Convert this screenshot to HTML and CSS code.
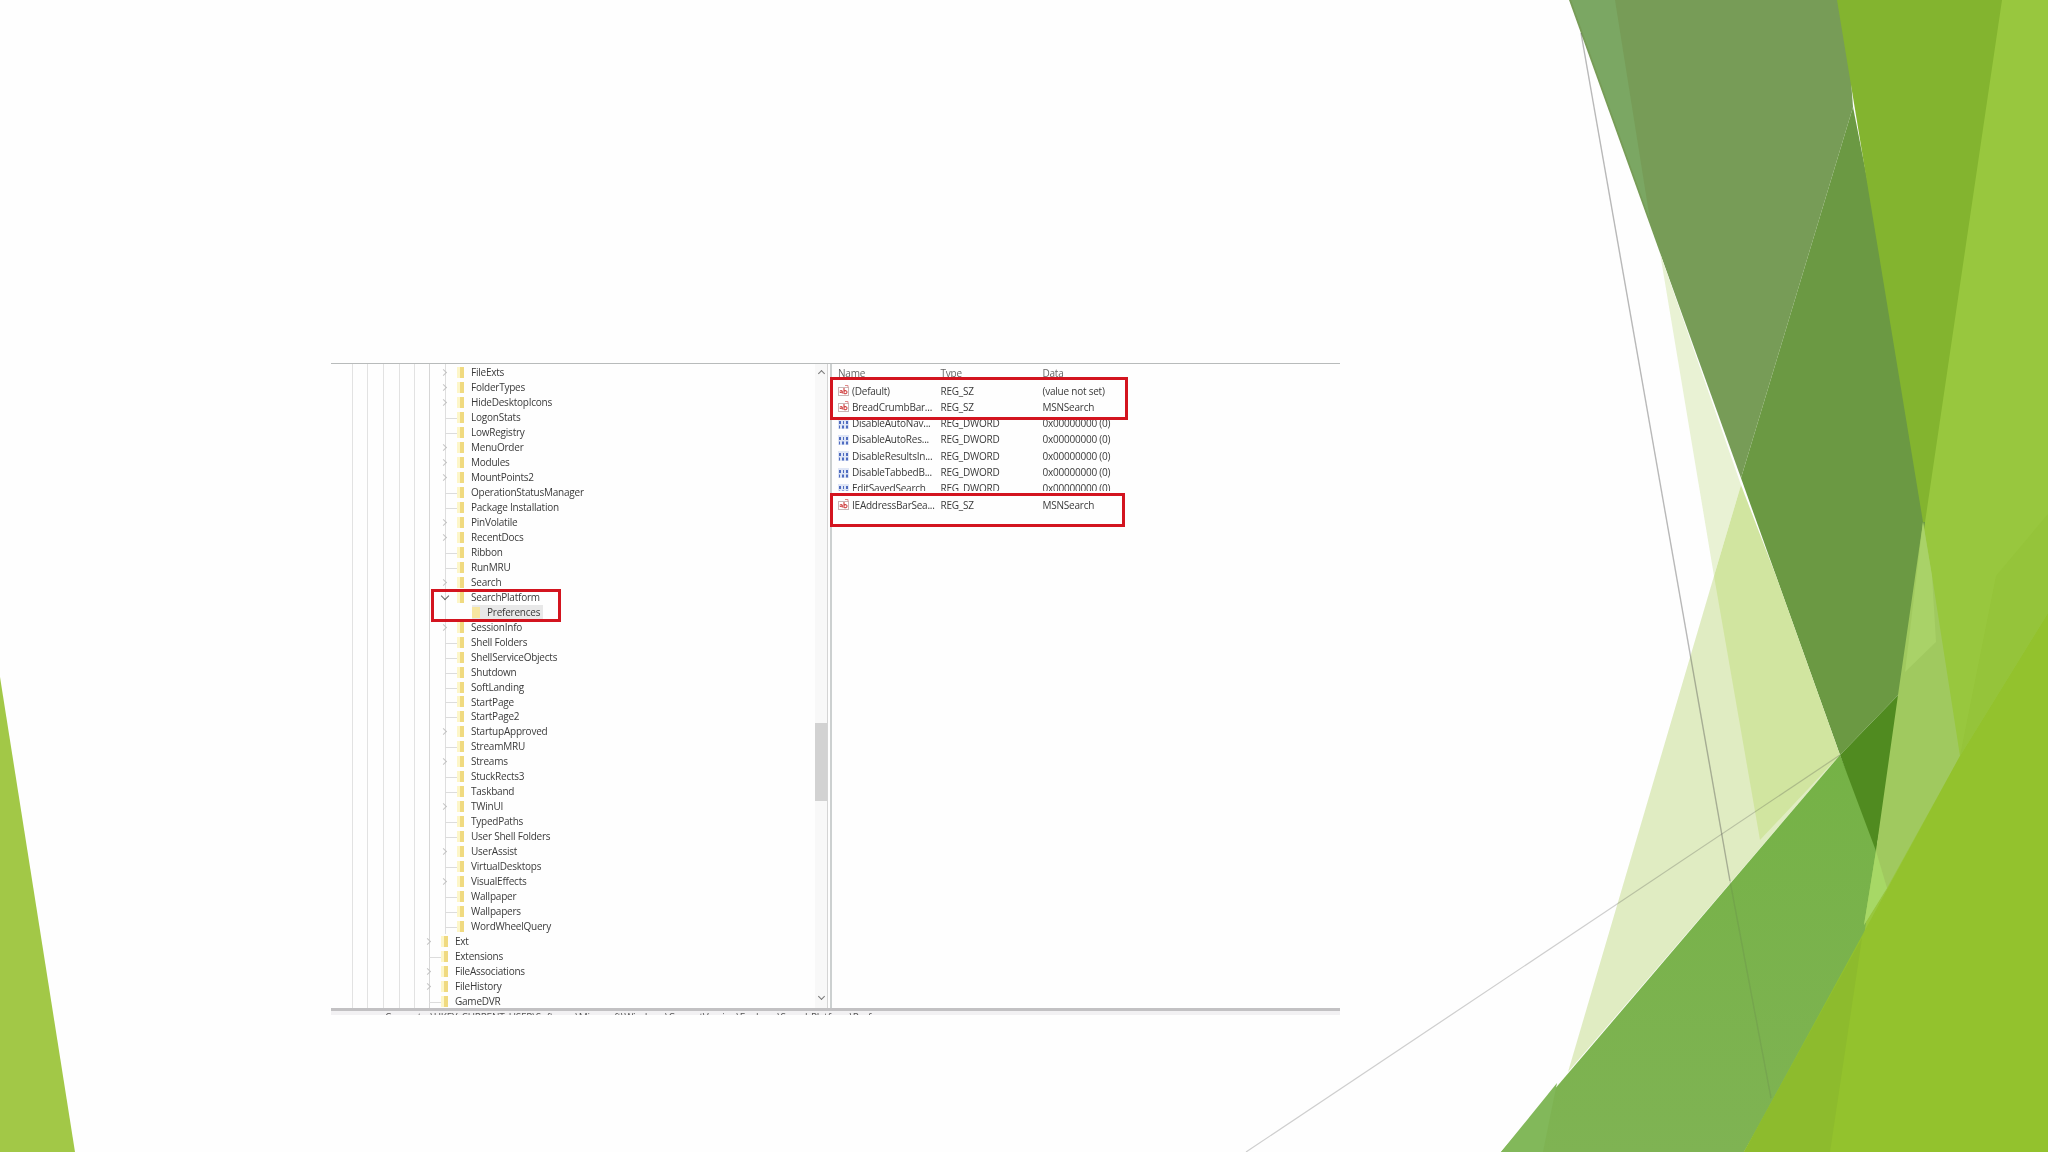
FILE: index.html
```html
<!DOCTYPE html>
<html lang="en">
<head>
<meta charset="utf-8">
<title>Registry editor slide</title>
<link rel="stylesheet" href="styles.css">
</head>
<body>
<main class="slide">
  <svg class="facet" viewBox="0 0 2048 1152" aria-hidden="true">
    <defs>
      <linearGradient id="mid-fill" x1="0" y1="0" x2="0" y2="1">
        <stop offset="0" stop-color="#75b246"/>
        <stop offset="1" stop-color="#7fb353"/>
      </linearGradient>
    </defs>
    <polygon class="f-olive" points="1569,0 1845,0 1853,107 1741,478"/>
    <polygon class="f-olive-edge" points="1571,0 1615,0 1650,220"/>
    <polygon class="f-moss" points="1853,107 1935,522 1905,688 1840,755 1741,478"/>
    <polygon class="f-grass" points="1837,0 2010,0 1930,522 1923,522"/>
    <polygon class="f-pale-a" points="1660,253 1741,485 1714,576"/>
    <polygon class="f-pale-b" points="1714,576 1840,755 1568,1072"/>
    <polygon class="f-pale-c" points="1741,485 1776,576 1840,755 1760,840 1714,576"/>
    <polygon fill="url(#mid-fill)" points="1840,755 1880,851 1868,936 1744,1152 1501,1152"/>
    <polygon class="f-mid-edge" points="1501,1152 1543,1152 1557,1083"/>
    <polygon class="f-deep" points="1840,755 1905,688 1876,851"/>
    <polygon class="f-lime" points="2002,0 2048,0 2048,1152 1744,1152 1864,936"/>
    <polygon class="f-soft" points="1923,522 1932,576 1960,756 1887,888 1864,925 1876,851 1899,688"/>
    <polygon class="f-soft-top" points="1923,522 1932,576 1936,642 1905,672"/>
    <polygon class="f-soft-low" points="1876,851 1887,888 1864,925"/>
    <polygon class="f-bright" points="1744,1152 1960,756 2048,613 2048,1152"/>
    <polygon class="f-bright-low" points="1744,1152 1862,938 1830,1152"/>
    <polygon class="f-corner" points="1996,576 2048,514 2048,613 1960,756"/>
    <polygon class="f-left" points="0,677 75,1152 0,1152"/>
    <line class="f-line-a" x1="1581" y1="33" x2="1730" y2="881"/>
    <line class="f-line-c" x1="1730" y1="881" x2="1771" y2="1098"/>
    <line class="f-line-b" x1="1246" y1="1152" x2="1840" y2="755"/>
  </svg>

  <section class="shot">
    <div class="panes">
      <div class="tree">
        <div class="row"><span class="arrow"></span><span class="folder"></span><span>FileExts</span></div>
        <div class="row"><span class="arrow"></span><span class="folder"></span><span>FolderTypes</span></div>
        <div class="row"><span class="arrow"></span><span class="folder"></span><span>HideDesktopIcons</span></div>
        <div class="row"><span class="tick"></span><span class="folder"></span><span>LogonStats</span></div>
        <div class="row"><span class="tick"></span><span class="folder"></span><span>LowRegistry</span></div>
        <div class="row"><span class="arrow"></span><span class="folder"></span><span>MenuOrder</span></div>
        <div class="row"><span class="arrow"></span><span class="folder"></span><span>Modules</span></div>
        <div class="row"><span class="arrow"></span><span class="folder"></span><span>MountPoints2</span></div>
        <div class="row"><span class="tick"></span><span class="folder"></span><span>OperationStatusManager</span></div>
        <div class="row"><span class="tick"></span><span class="folder"></span><span>Package Installation</span></div>
        <div class="row"><span class="arrow"></span><span class="folder"></span><span>PinVolatile</span></div>
        <div class="row"><span class="arrow"></span><span class="folder"></span><span>RecentDocs</span></div>
        <div class="row"><span class="tick"></span><span class="folder"></span><span>Ribbon</span></div>
        <div class="row"><span class="tick"></span><span class="folder"></span><span>RunMRU</span></div>
        <div class="row"><span class="arrow"></span><span class="folder"></span><span>Search</span></div>
        <div class="row"><span class="arrow open"></span><span class="folder"></span><span>SearchPlatform</span></div>
        <div class="row child"><span class="selected"><span class="folder"></span><span>Preferences</span></span></div>
        <div class="row"><span class="arrow"></span><span class="folder"></span><span>SessionInfo</span></div>
        <div class="row"><span class="tick"></span><span class="folder"></span><span>Shell Folders</span></div>
        <div class="row"><span class="tick"></span><span class="folder"></span><span>ShellServiceObjects</span></div>
        <div class="row"><span class="tick"></span><span class="folder"></span><span>Shutdown</span></div>
        <div class="row"><span class="tick"></span><span class="folder"></span><span>SoftLanding</span></div>
        <div class="row"><span class="tick"></span><span class="folder"></span><span>StartPage</span></div>
        <div class="row"><span class="tick"></span><span class="folder"></span><span>StartPage2</span></div>
        <div class="row"><span class="arrow"></span><span class="folder"></span><span>StartupApproved</span></div>
        <div class="row"><span class="tick"></span><span class="folder"></span><span>StreamMRU</span></div>
        <div class="row"><span class="arrow"></span><span class="folder"></span><span>Streams</span></div>
        <div class="row"><span class="tick"></span><span class="folder"></span><span>StuckRects3</span></div>
        <div class="row"><span class="tick"></span><span class="folder"></span><span>Taskband</span></div>
        <div class="row"><span class="arrow"></span><span class="folder"></span><span>TWinUI</span></div>
        <div class="row"><span class="tick"></span><span class="folder"></span><span>TypedPaths</span></div>
        <div class="row"><span class="tick"></span><span class="folder"></span><span>User Shell Folders</span></div>
        <div class="row"><span class="arrow"></span><span class="folder"></span><span>UserAssist</span></div>
        <div class="row"><span class="tick"></span><span class="folder"></span><span>VirtualDesktops</span></div>
        <div class="row"><span class="arrow"></span><span class="folder"></span><span>VisualEffects</span></div>
        <div class="row"><span class="tick"></span><span class="folder"></span><span>Wallpaper</span></div>
        <div class="row"><span class="tick"></span><span class="folder"></span><span>Wallpapers</span></div>
        <div class="row"><span class="tick"></span><span class="folder"></span><span>WordWheelQuery</span></div>
        <div class="row top"><span class="arrow"></span><span class="folder"></span><span>Ext</span></div>
        <div class="row top"><span class="tick"></span><span class="folder"></span><span>Extensions</span></div>
        <div class="row top"><span class="arrow"></span><span class="folder"></span><span>FileAssociations</span></div>
        <div class="row top"><span class="arrow"></span><span class="folder"></span><span>FileHistory</span></div>
        <div class="row top"><span class="tick"></span><span class="folder"></span><span>GameDVR</span></div>
      </div>

      <div class="scroll">
        <span class="scroll-up"></span>
        <span class="thumb"></span>
        <span class="scroll-down"></span>
      </div>

      <div class="values">
        <div class="head"><span class="c-name">Name</span><span class="c-type">Type</span><span class="c-data">Data</span></div>
        <div class="val"><span class="c-name"><svg class="ico" viewBox="0 0 11 11"><use href="#ico-sz"/></svg>(Default)</span><span class="c-type">REG_SZ</span><span class="c-data">(value not set)</span></div>
        <div class="val"><span class="c-name"><svg class="ico" viewBox="0 0 11 11"><use href="#ico-sz"/></svg>BreadCrumbBar...</span><span class="c-type">REG_SZ</span><span class="c-data">MSNSearch</span></div>
        <div class="val"><span class="c-name"><svg class="ico" viewBox="0 0 11 11"><use href="#ico-dw"/></svg>DisableAutoNav...</span><span class="c-type">REG_DWORD</span><span class="c-data">0x00000000 (0)</span></div>
        <div class="val"><span class="c-name"><svg class="ico" viewBox="0 0 11 11"><use href="#ico-dw"/></svg>DisableAutoRes...</span><span class="c-type">REG_DWORD</span><span class="c-data">0x00000000 (0)</span></div>
        <div class="val"><span class="c-name"><svg class="ico" viewBox="0 0 11 11"><use href="#ico-dw"/></svg>DisableResultsIn...</span><span class="c-type">REG_DWORD</span><span class="c-data">0x00000000 (0)</span></div>
        <div class="val"><span class="c-name"><svg class="ico" viewBox="0 0 11 11"><use href="#ico-dw"/></svg>DisableTabbedB...</span><span class="c-type">REG_DWORD</span><span class="c-data">0x00000000 (0)</span></div>
        <div class="val cut"><span class="c-name"><svg class="ico" viewBox="0 0 11 11"><use href="#ico-dw"/></svg>EditSavedSearch</span><span class="c-type">REG_DWORD</span><span class="c-data">0x00000000 (0)</span></div>
        <div class="val after-cut"><span class="c-name"><svg class="ico" viewBox="0 0 11 11"><use href="#ico-sz"/></svg>IEAddressBarSea...</span><span class="c-type">REG_SZ</span><span class="c-data">MSNSearch</span></div>
      </div>
    </div>
    <div class="status">Computer\HKEY_CURRENT_USER\Software\Microsoft\Windows\CurrentVersion\Explorer\SearchPlatform\Preferences</div>

    <span class="mark mark-tree"></span>
    <span class="mark mark-top"></span>
    <span class="mark mark-bottom"></span>
  </section>

  <svg class="defs" aria-hidden="true">
    <symbol id="ico-sz" viewBox="0 0 11 11">
      <rect x="0.5" y="2.5" width="10" height="8" fill="#fff" stroke="#c9b6b6"/>
      <path d="M2 6.500c0-1.400 2.300-1.400 2.300 0v2M2 8c0-1 2.300-1 2.300-.6M6 3v5.500c1.800.6 3 0 3-1.500s-1.700-1.800-3-.8" fill="none" stroke="#cf3f3f" stroke-width="1.100"/>
      <path d="M7 .5h3v2" fill="none" stroke="#e08a8a"/>
    </symbol>
    <symbol id="ico-dw" viewBox="0 0 11 11">
      <rect x="0" y="1" width="11" height="10" fill="#dfe6f6"/>
      <path d="M1 3h2v3H1zM5 3h1v3H5zM8 3h2v3H8zM1 7.500h1v3H1zM4 7.500h2v3H4zM8 7.500h2v3H8z" fill="#4f6cc0"/>
    </symbol>
  </svg>
</main>
</body>
</html>
```
FILE: styles.css
```css
html, body {
  margin: 0;
  padding: 0;
  background: #fefefe;
}

.slide {
  position: relative;
  box-sizing: border-box;
  width: 2048px;
  height: 1152px;
  overflow: hidden;
  padding: 363px 0 0 331px;
  background: #fefefe;
  font-family: "Open Sans", "Noto Sans", sans-serif;
}

/* Decorative facet artwork */
.facet {
  position: absolute;
  inset: 0;
  width: 2048px;
  height: 1152px;
}
.f-lime { fill: #98c73e; }
.f-olive { fill: #779c57; }
.f-olive-edge { fill: #7ba763; }
.f-moss { fill: #6b9943; }
.f-grass { fill: #83b42f; }
.f-pale-a { fill: #e9f2d4; }
.f-pale-b { fill: #e0ecc2; }
.f-pale-c { fill: #d1e5a0; }
.f-mid-edge { fill: #82b85a; }
.f-deep { fill: #508b20; }
.f-soft { fill: #a0c95f; }
.f-soft-top { fill: #a9d268; }
.f-soft-low { fill: #a7d866; }
.f-bright { fill: #93c22d; }
.f-bright-low { fill: #8dbb2d; }
.f-corner { fill: #95c43a; }
.f-left { fill: #a2c847; }
.f-line-a { stroke: rgba(70, 70, 70, 0.38); stroke-width: 1.4; }
.f-line-b { stroke: rgba(70, 70, 70, 0.26); stroke-width: 1.2; }
.f-line-c { stroke: rgba(70, 70, 70, 0.12); stroke-width: 1.4; }

/* Registry editor screenshot */
.shot {
  position: relative;
  display: flex;
  flex-direction: column;
  width: 1009px;
  height: 652px;
  filter: blur(0.6px);
  color: #3a3a3a;
  font-size: 10px;
  letter-spacing: -0.23px;
}

.panes {
  display: flex;
  height: 645px;
  border-top: 1.500px solid #b8bbbb;
  box-sizing: border-box;
  background: #fefefe;
}

.tree {
  box-sizing: border-box;
  flex: 0 0 484px;
  height: 100%;
  overflow: hidden;
  padding-top: 1.200px;
  background:
    linear-gradient(#e2e2e2, #e2e2e2) 21px 0 / 1px 100% no-repeat,
    linear-gradient(#e2e2e2, #e2e2e2) 36px 0 / 1px 100% no-repeat,
    linear-gradient(#e2e2e2, #e2e2e2) 52px 0 / 1px 100% no-repeat,
    linear-gradient(#e2e2e2, #e2e2e2) 68px 0 / 1px 100% no-repeat,
    linear-gradient(#e2e2e2, #e2e2e2) 83px 0 / 1px 100% no-repeat,
    linear-gradient(#d6d6d6, #d6d6d6) 98px 0 / 1px 100% no-repeat,
    linear-gradient(#dedede, #dedede) 114px 0 / 1px 570px no-repeat;
}

.row {
  display: flex;
  align-items: center;
  height: 14.976px;
  line-height: 14.976px;
  padding-left: 108px;
  white-space: nowrap;
}
.row.top { padding-left: 92px; }
.row.child { padding-left: 141px; }

.arrow,
.tick {
  flex: 0 0 18px;
  height: 15px;
  position: relative;
}
.arrow::before {
  content: "";
  position: absolute;
  left: 2px;
  top: 5px;
  width: 4px;
  height: 4px;
  border-top: 1px solid #c4c4c4;
  border-right: 1px solid #c4c4c4;
  transform: rotate(45deg);
}
.arrow.open::before {
  left: 3px;
  top: 3px;
  width: 5px;
  height: 5px;
  border-color: #666;
  transform: rotate(135deg);
}
.tick::before {
  content: "";
  position: absolute;
  left: 6px;
  top: 8px;
  width: 12px;
  height: 1px;
  background: #dcdcdc;
}

.folder {
  flex: 0 0 7px;
  width: 7px;
  height: 11px;
  margin-right: 7px;
  background: linear-gradient(90deg, #fdf6c8 0 40%, #f0da80 40% 100%);
}

.selected {
  display: flex;
  align-items: center;
  height: 14px;
  padding-right: 3px;
  background: #e8e8e8;
}
.selected .folder {
  width: 8px;
  flex-basis: 8px;
  background: #f7e6a0;
}

.scroll {
  display: flex;
  flex-direction: column;
  align-items: center;
  box-sizing: border-box;
  flex: 0 0 13px;
  height: 100%;
  padding: 7px 0 9px;
  background: #f8f8f8;
  border-right: 1px solid #d4d4d4;
}
.scroll-up,
.scroll-down {
  width: 4px;
  height: 4px;
  border-top: 1px solid #777;
  border-left: 1px solid #777;
}
.scroll-up { transform: rotate(45deg); }
.scroll-down { margin-top: auto; transform: rotate(225deg); }
.thumb {
  flex: 0 0 78px;
  width: 12px;
  margin-top: 347px;
  background: #d2d2d2;
}

.values {
  flex: 1;
  min-width: 0;
  box-sizing: border-box;
  padding-left: 3px;
  border-left: 2px solid #ccd0d0;
  margin-left: 2px;
}

.head,
.val {
  display: flex;
  align-items: center;
  padding-left: 3px;
  white-space: nowrap;
}
.head {
  height: 13px;
  overflow: hidden;
  align-items: flex-start;
  margin-bottom: 5.500px;
  color: #666;
  line-height: 18px;
}
.val {
  height: 16.300px;
  line-height: 16.300px;
}
.val.cut {
  height: 11px;
  overflow: hidden;
  align-items: flex-start;
}
.val.after-cut { margin-top: 5.300px; }

.c-name {
  display: flex;
  align-items: center;
  flex: 0 0 102.500px;
  min-width: 0;
  overflow: hidden;
}
.c-type { flex: 0 0 102px; }
.c-data { flex: 0 0 auto; }

.ico {
  flex: 0 0 11px;
  width: 11px;
  height: 11px;
  margin-right: 3px;
}

.status {
  box-sizing: border-box;
  height: 7px;
  overflow: hidden;
  border-top: 3px solid #c2c1c3;
  padding-left: 54px;
  line-height: 13px;
  background: #f2f1f3;
  color: #555;
  white-space: nowrap;
}

.mark {
  position: absolute;
  box-sizing: border-box;
  border: 3px solid #d3141f;
}
.mark-tree { left: 100px; top: 226px; width: 130px; height: 33px; }
.mark-top { left: 499px; top: 14px; width: 298px; height: 43px; }
.mark-bottom { left: 499px; top: 130px; width: 295px; height: 34px; }

.defs {
  position: absolute;
  width: 0;
  height: 0;
}
```
